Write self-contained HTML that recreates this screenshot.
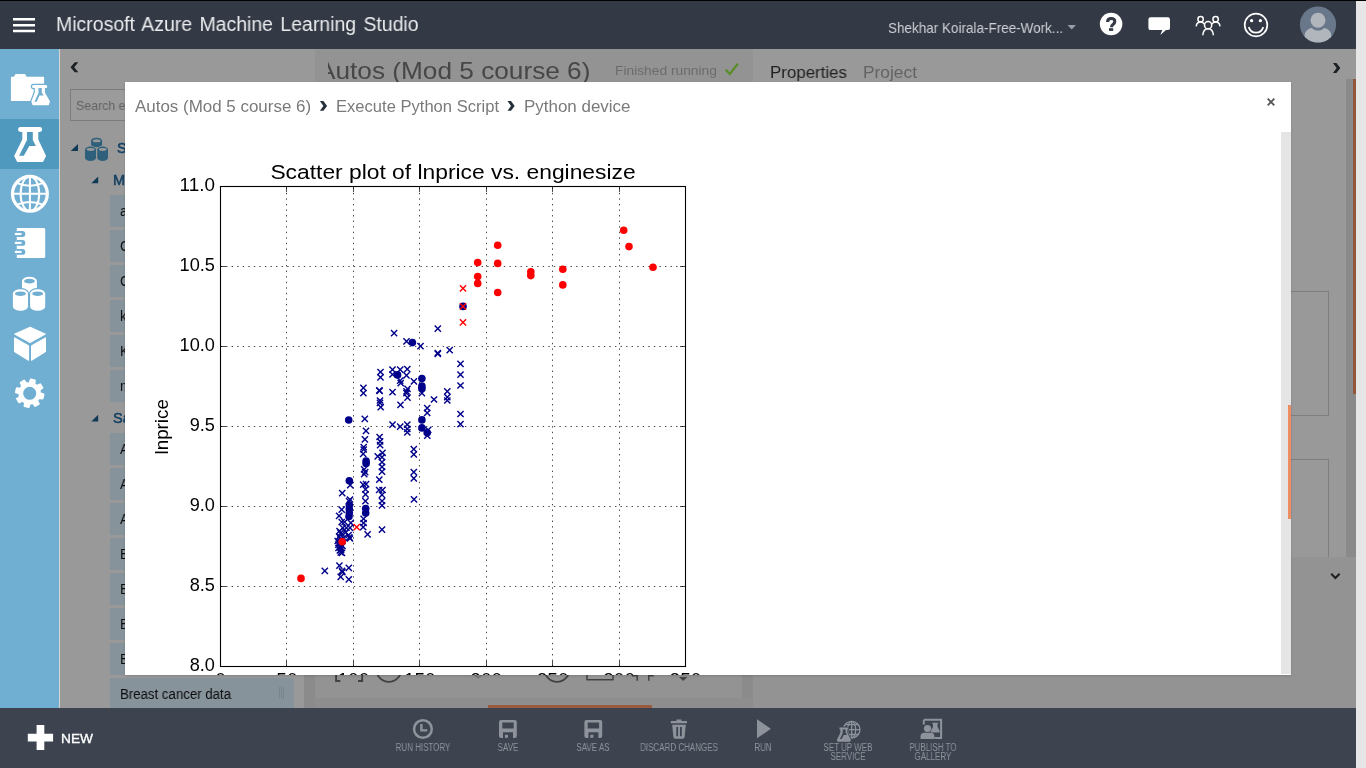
<!DOCTYPE html>
<html lang="en">
<head>
<meta charset="utf-8">
<title>Microsoft Azure Machine Learning Studio</title>
<style>
*{box-sizing:border-box;margin:0;padding:0}
html,body{width:1366px;height:768px;overflow:hidden;background:#999;font-family:"Liberation Sans",sans-serif;}
.abs{position:absolute}
.t{position:absolute;white-space:nowrap;line-height:1;transform-origin:0 0;will-change:transform}
#topline{left:0;top:0;width:1366px;height:1px;background:#000;z-index:50}
#header{left:0;top:1px;width:1356px;height:48px;background:#343a45}
#rstrip{left:1356px;top:1px;width:10px;height:767px;background:#e6e6e6}
#sidebar{left:0;top:49px;width:59px;height:659px;background:#70afd2}
#sideline{left:59px;top:49px;width:1px;height:659px;background:#d6d3d1}
#sidesel{left:0;top:119px;width:59px;height:50px;background:#4f98be}
#palette{left:60px;top:49px;width:255px;height:659px;background:#999;overflow:hidden}
#canvas{left:315px;top:49px;width:438px;height:659px;background:#939393;overflow:hidden}
#props{left:753px;top:49px;width:603px;height:659px;background:#999;overflow:hidden}
#bottombar{left:0;top:708px;width:1356px;height:60px;background:#3d4450}
#modal{left:125px;top:82px;width:1166px;height:593px;background:#fff;overflow:hidden;box-shadow:0 1px 2px rgba(0,0,0,.15)}
.pitem{position:absolute;left:50px;width:184px;height:32px;background:#87939b}
.pitem span{will-change:transform;position:absolute;left:9.700px;top:9.100px;font-size:14px;color:#0c0c0c;white-space:nowrap;line-height:1;transform-origin:0 0;transform:scaleX(.945)}
.pitem i{position:absolute;left:169px;top:9px;width:5px;height:12px;border-left:1px solid #79848b;border-right:1px solid #79848b}
.pitem i:after{content:"";position:absolute;left:1px;top:0;width:1px;height:12px;background:#79848b}
.bl{will-change:transform;position:absolute;font-size:10px;color:#8e939b;white-space:nowrap;line-height:1;text-align:center;transform:scaleX(.8)}
</style>
</head>
<body>
<div id="topline" class="abs"></div>
<div id="header" class="abs">
<svg class="abs" style="left:0;top:0" width="60" height="48" viewBox="0 1 60 48"><path d="M13 19.2h22M13 25.2h22M13 31.1h22" stroke="#fff" stroke-width="2.5" fill="none"/></svg>
<div id="htitle" class="t" style="left:56.3px;top:12.900px;font-size:20px;color:#e9ebed;word-spacing:2px;transform:scaleX(0.9731)">Microsoft Azure Machine Learning Studio</div>
<div id="huser" class="t" style="left:887.8px;top:19px;font-size:15px;color:#cdd0d5;transform:scaleX(0.8989)">Shekhar Koirala-Free-Work...</div>
<svg class="abs" style="left:1066px;top:22px" width="12" height="8" viewBox="0 0 12 8"><path d="M1.5 2h8.4l-4.2 4.4z" fill="#9aa0a8"/></svg>
<svg id="ihelp" class="abs" style="left:1098px;top:10px" width="26" height="28" viewBox="1098 11 26 28">
<circle cx="1111.100" cy="24.050" r="11.250" fill="#fff"/>
<path d="M1107.600 21.900c0-2.200 1.500-3.400 3.600-3.400s3.600 1.200 3.600 3c0 1.500-.8 2.200-1.800 2.900-1 .7-1.500 1.300-1.500 2.500v.4" fill="none" stroke="#343a45" stroke-width="3.100"/>
<rect x="1109" y="28.200" width="4.200" height="2.700" fill="#343a45"/>
</svg>
<svg id="ichat" class="abs" style="left:1146px;top:10px" width="28" height="28" viewBox="1146 11 28 28">
<path d="M1150.600 17.300h17.200q2.200 0 2.200 2.200v8.400q0 2.200-2.200 2.200h-1.800l-5.700 5 2-5h-11.700q-2.200 0-2.200-2.200v-8.400q0-2.200 2.200-2.200z" fill="#fff"/>
</svg>
<svg id="ipeople" class="abs" style="left:1194px;top:10px" width="28" height="28" viewBox="1194 11 28 28" fill="none" stroke="#fff" stroke-width="1.500">
<circle cx="1200.600" cy="19.200" r="2.700"/><circle cx="1215.600" cy="19.200" r="2.700"/><circle cx="1208.100" cy="25.200" r="3.600"/>
<path d="M1196.200 26.300c.3-2.700 2-4.300 4.400-4.300 1.700 0 3 .8 3.800 2.200M1220 26.300c-.3-2.700-2-4.300-4.400-4.300-1.700 0-3 .8-3.800 2.200M1202.800 35.300c.3-3.800 2.300-6.600 5.300-6.600s5 2.800 5.300 6.600"/>
</svg>
<svg id="ismile" class="abs" style="left:1242px;top:10px" width="28" height="30" viewBox="1242 11 28 30" fill="none" stroke="#fff">
<circle cx="1256" cy="25" r="11.300" stroke-width="1.700"/>
<path d="M1248.700 27.100c1.300 3.700 4 5.600 7.300 5.600s6-1.900 7.300-5.600" stroke-width="1.700"/>
<circle cx="1251.600" cy="20.700" r="1.650" fill="#fff" stroke="none"/><circle cx="1260.400" cy="20.700" r="1.650" fill="#fff" stroke="none"/>
</svg>
<svg id="iavatar" class="abs" style="left:1299px;top:4.300px" width="38" height="38" viewBox="1299 6 38 38">
<defs><clipPath id="avc"><circle cx="1318" cy="25.500" r="18.100"/></clipPath></defs>
<circle cx="1318" cy="25.500" r="18.100" fill="#68778a"/>
<g clip-path="url(#avc)" fill="#b1b6bc"><circle cx="1318" cy="21.200" r="7.500"/><path d="M1304.500 45v-7.500c0-4.800 3.200-8 7.300-8.600 1.600 1.700 3.700 2.600 6.200 2.600s4.600-.9 6.200-2.600c4.100.6 7.300 3.800 7.300 8.600v7.500z"/></g>
</svg>
</div>
<div id="sidebar" class="abs"></div>
<div id="sidesel" class="abs"></div>
<div id="sideline" class="abs"></div>
<svg id="sideicons" class="abs" style="left:0;top:49px" width="60" height="659" viewBox="0 49 60 659">
<!-- folder + flask -->
<path d="M10.900 101V77.500q0-.7.700-.7h2.300l1.300-2.200q.3-.5.900-.5h8.500q.6 0 .9.500l1 2.200h16.900q.7 0 .7.700V101z" fill="#fff"/>
<path d="M33.500 85h12.300q1.500 0 1.500 1.500t-1.500 1.500h-.9v4.500l5.100 8.900-1.300 3.800h-16.100l-1.300-3.800 3.500-8.900v-4.500h-1.300q-1.500 0-1.500-1.500t1.500-1.500z" fill="#fff" stroke="#70afd2" stroke-width="2.400" stroke-linejoin="round"/>
<path d="M33.500 85h12.300q1.500 0 1.500 1.500t-1.500 1.500h-.9v4.500l5.100 8.900-1.300 3.800h-16.100l-1.300-3.800 3.500-8.900v-4.500h-1.300q-1.500 0-1.500-1.500t1.500-1.500z" fill="#fff"/>
<path d="M38.500 88v5l-4.100 8.700h2.300l2.800-6.200h4.300l-2-2.800V88z" fill="#70afd2"/>
<!-- flask selected -->
<path d="M20.500 127.100h19.200a2.450 2.450 0 0 1 0 4.900h-1.400v7.500l7.800 16.500-3.100 5.900h-25.800l-3.100-5.900 8.200-16.500v-7.500h-1.800a2.450 2.450 0 0 1 0-4.900z" fill="#fff"/>
<path d="M27 132v8l-7.900 15.800h4.700l5.500-9.900h6.600l-3.100-5.900v-8z" fill="#4f98be"/>
<!-- globe -->
<g fill="none" stroke="#fff"><circle cx="29.900" cy="193.800" r="17.400" stroke-width="3.200"/>
<g stroke-width="2"><path d="M29.900 176.500v34.600M12.500 193.800h34.800"/><ellipse cx="29.900" cy="193.800" rx="9.300" ry="17.300"/>
<path d="M16.500 182.800q13.400 5.800 26.800 0M16.500 204.800q13.400-5.800 26.800 0"/></g></g>
<!-- notebook -->
<path d="M16.800 227.900h26.900q1.500 0 1.500 1.500v27.100q0 1.500-1.500 1.500h-26.900z" fill="#fff"/>
<g fill="#70afd2"><path d="M16.800 231.050h5.600a2.950 2.950 0 0 1 0 5.900h-5.600zM16.800 239.950h5.600a2.950 2.950 0 0 1 0 5.900h-5.600zM16.800 248.950h5.600a2.950 2.950 0 0 1 0 5.900h-5.600z"/></g>
<g fill="#fff"><rect x="14.800" y="232.950" width="6.700" height="2.100"/><rect x="14.800" y="241.850" width="6.700" height="2.100"/><rect x="14.800" y="250.850" width="6.700" height="2.100"/></g>
<!-- cylinders -->
<g fill="#fff" stroke="#70afd2" stroke-width="2.200" paint-order="stroke" style="paint-order:stroke">
<path d="M22 281a7.450 4.300 0 0 1 14.900 0v10a7.450 4.300 0 0 1-14.900 0z"/>
<path d="M12.900 293.500a7.550 4.300 0 0 1 15.100 0v13a7.550 4.300 0 0 1-15.100 0z"/>
<path d="M30.100 293.500a7.550 4.300 0 0 1 15.100 0v13a7.550 4.300 0 0 1-15.100 0z"/></g>
<g fill="#70afd2"><ellipse cx="29.450" cy="281.100" rx="5.400" ry="2.300"/><ellipse cx="20.450" cy="293.700" rx="5.400" ry="2.300"/><ellipse cx="37.650" cy="293.700" rx="5.400" ry="2.300"/></g>
<!-- cube -->
<g fill="#fff" stroke="#fff" stroke-width="1" stroke-linejoin="round"><path d="M30.100 327.200l15.300 6.900-15.300 8.500-15.500-8.500z"/><path d="M14.500 337.800l14.100 8v14.600l-14.100-8.700z"/><path d="M31.500 345.800l14-8v13.900l-14 8.700z"/></g>
<!-- gear -->
<path d="M40.1 393.3 L43.5 394.4 L42.5 398.4 L39.0 397.9 L37.1 400.6 L38.7 403.8 L35.2 406.0 L33.1 403.1 L29.7 403.7 L28.6 407.1 L24.6 406.1 L25.1 402.6 L22.4 400.7 L19.2 402.3 L17.0 398.8 L19.9 396.7 L19.3 393.3 L15.9 392.2 L16.9 388.2 L20.4 388.7 L22.3 386.0 L20.7 382.8 L24.2 380.6 L26.3 383.5 L29.7 382.9 L30.8 379.5 L34.8 380.5 L34.3 384.0 L37.0 385.9 L40.2 384.3 L42.4 387.8 L39.5 389.9Z" fill="#fff" stroke="#fff" stroke-width="2" stroke-linejoin="round"/>
<circle cx="29.700" cy="393.300" r="6.500" fill="#70afd2"/>
</svg>
<div id="palette" class="abs">
<svg class="abs" style="left:0;top:0" width="255" height="659" viewBox="60 49 255 659">
<path d="M78.300 62.200h-3.500l-4.300 5.050 4.300 5.050h3.500l-4.100-5.050z" fill="#1c1f24"/>
<path d="M70.700 151h7.300v-7z" fill="#0f3a55"/><path d="M91.300 183.300h6.900v-6.900z" fill="#0f3a55"/><path d="M91.300 421.600h6.900v-6.900z" fill="#0f3a55"/>
<g fill="#2f607b" stroke="#999" stroke-width="1.200" style="paint-order:stroke"><path d="M91.100 140.500a5.500 2.800 0 0 1 11 0v4a5.500 2.800 0 0 1-11 0z"/><path d="M85 149.500a5.500 2.900 0 0 1 11 0v8.500a5.500 2.900 0 0 1-11 0z"/><path d="M97.200 149.500a5.400 2.900 0 0 1 10.800 0v8.500a5.400 2.900 0 0 1-10.800 0z"/></g>
<g fill="#999"><ellipse cx="96.700" cy="140.700" rx="3.900" ry="1.500"/><ellipse cx="90.600" cy="149.500" rx="3.900" ry="1.400"/><ellipse cx="102.700" cy="149.500" rx="3.900" ry="1.400"/></g>
</svg>
<div class="abs" style="left:10px;top:40px;width:230px;height:32px;border:1px solid #7c7c7c;background:#9b9b9b"></div>
<div id="psearch" class="t" style="left:16px;top:49.600px;font-size:13px;color:#636363;transform:scaleX(.95)">Search experiment items</div>
<div id="pS" class="t" style="left:57px;top:91.600px;font-size:14.500px;color:#123f62;-webkit-text-stroke:.5px #123f62">Saved Datasets</div>
<div id="pM" class="t" style="left:52.500px;top:123.900px;font-size:14.500px;color:#123f62;-webkit-text-stroke:.5px #123f62">My Datasets</div>
<div id="pSa" class="t" style="left:52.500px;top:361.600px;font-size:14.500px;color:#123f62;-webkit-text-stroke:.5px #123f62">Samples</div>
<div class="pitem" style="top:146px"><span>autos-prices.csv</span><i></i></div>
<div class="pitem" style="top:181px"><span>Cereals.csv</span><i></i></div>
<div class="pitem" style="top:216px"><span>Credit_Scoring.csv</span><i></i></div>
<div class="pitem" style="top:251px"><span>kc_house_data.csv</span><i></i></div>
<div class="pitem" style="top:286px"><span>KNN_results.csv</span><i></i></div>
<div class="pitem" style="top:321px"><span>nyc-taxi.csv</span><i></i></div>
<div class="pitem" style="top:384px"><span>Adult Census Income Binary ...</span><i></i></div>
<div class="pitem" style="top:419px"><span>Airport Codes Dataset</span><i></i></div>
<div class="pitem" style="top:454px"><span>Automobile price data (Raw)</span><i></i></div>
<div class="pitem" style="top:489px"><span>Bike Rental UCI dataset</span><i></i></div>
<div class="pitem" style="top:524px"><span>Bill Gates RGB Image</span><i></i></div>
<div class="pitem" style="top:559px"><span>Blood donation data</span><i></i></div>
<div class="pitem" style="top:594px"><span>Book Reviews from Amazon</span><i></i></div>
<div class="pitem" style="top:629px"><span>Breast cancer data</span><i></i></div>
<div class="abs" style="left:244px;top:81px;width:11px;height:578px;background:#8b8b8b"></div>
</div>
<div id="canvas" class="abs">
<div id="ctitle" class="abs" style="left:13px;top:9px;width:300px;height:30px;overflow:hidden"><div class="t" style="left:-9.800px;top:0.700px;font-size:24px;color:#474747;transform:scaleX(1.092)">Autos (Mod 5 course 6)</div></div>
<div id="cfin" class="t" style="left:299.8px;top:14.600px;font-size:13.500px;color:#6c6c6c;transform:scaleX(1.0208)">Finished running</div>
<svg class="abs" style="left:408px;top:12px" width="18" height="16" viewBox="723 61 18 16"><path d="M725.500 69.500l4.300 4.500 8-10.200" fill="none" stroke="#5b8c2a" stroke-width="2.200"/></svg>
<svg class="abs" style="left:0;top:620px" width="438" height="39" viewBox="315 669 438 39" fill="none" stroke="#424242" stroke-width="1.500">
<path d="M336.100 675v6h4.200M358 681h4.200v-6" stroke-width="1.900"/>
<circle cx="388.800" cy="669.300" r="12.500" stroke-width="1.800"/><circle cx="557" cy="669.300" r="12.500" stroke-width="1.800"/>
<path d="M473.800 674.300l4.400 3.500 4.400-3.500" stroke="#6c6c6c" stroke-width="1.200"/>
<rect x="587" y="670" width="26" height="9.700" fill="#999"/>
<path d="M632 675.700h5.200v5M653.800 675.700h-5v5"/>
<path d="M679 677h8.400l-4.200 4z" fill="#454545" stroke="none"/>
</svg>
<div class="abs" style="left:427px;top:33px;width:11px;height:616px;background:#8b8b8b"></div>
<div class="abs" style="left:0;top:649px;width:438px;height:10px;background:#8e8e8e"></div>
<div class="abs" style="left:173px;top:656px;width:164px;height:3px;background:#9a5a40"></div>
</div>
<div id="props" class="abs">
<div id="pprop" class="t" style="left:17.3px;top:14.500px;font-size:17px;color:#1f1f1f;transform:scaleX(0.9925)">Properties</div>
<div id="pproj" class="t" style="left:110.3px;top:14.500px;font-size:17px;color:#636363;transform:scaleX(1.0204)">Project</div>
<svg class="abs" style="left:575px;top:10px" width="16" height="16" viewBox="1328 59 16 16"><path d="M1332.900 63h3.500l3.900 5-3.900 4.900h-3.500l3.800-4.900z" fill="#1c1f24"/></svg>
<div class="abs" style="left:400px;top:242px;width:176px;height:125px;border:1px solid #7e7e7e"></div>
<div class="abs" style="left:400px;top:410px;width:176px;height:125px;border:1px solid #7e7e7e"></div>
<div class="abs" style="left:593px;top:30px;width:10px;height:478px;background:#8a8a8a"></div>
<div class="abs" style="left:600px;top:30px;width:3px;height:315px;background:#93553b"></div>
<div class="abs" style="left:0;top:508px;width:603px;height:151px;background:#939393"></div>
<svg class="abs" style="left:574px;top:520px" width="16" height="14" viewBox="1327 569 16 14"><path d="M1331.200 573.800l4.200 4.200 4.200-4.200" fill="none" stroke="#1c1f24" stroke-width="2"/></svg>
</div>
<div id="bottombar" class="abs">
<svg class="abs" style="left:0;top:0" width="1356" height="60" viewBox="0 708 1356 60">
<path d="M36.600 725h7.700v8.700h8.800v7.700h-8.800v8.700h-7.700v-8.700h-8.800v-7.700h8.800z" fill="#fff"/>
<g fill="none" stroke="#8e939b">
<circle cx="422.900" cy="729" r="8.850" stroke-width="2.500"/><path d="M421.400 724v6.400h5.900" stroke-width="2.400"/>
</g>
<g fill="#8e939b">
<path d="M501.0 719.900h13.800q2 0 2 2v14.200q0 2-2 2h-13.800q-2 0-2-2v-14.200q0-2 2-2zM502.3 722.400v6.100h11.400v-6.100zM503.0 732.300v5.800h10v-5.800z" fill-rule="evenodd"/><path d="M504.9 734.800h3.100v3h-3.100z"/>
<path d="M586.4 719.900h13.800q2 0 2 2v14.200q0 2-2 2h-13.800q-2 0-2-2v-14.200q0-2 2-2zM587.7 722.400v6.100h11.400v-6.100zM588.4 732.300v5.800h10v-5.800z" fill-rule="evenodd"/><path d="M590.3 734.800h3.100v3h-3.100z"/>
<path d="M676.500 719.500h5v1.600h5.500v2.200h-16.200v-2.200h5.700zM672.200 724.800h13.600l-1.200 12.300q-.2 1.600-1.800 1.600h-7.600q-1.600 0-1.800-1.600zM676.300 727v9.300h1.800V727zM680 727v9.300h1.800V727z" fill-rule="evenodd"/>
<path d="M757 719.300l13.900 9.500-13.900 9.500z"/>
</g>
<!-- set up web service -->
<g fill="none" stroke="#8e939b" stroke-width="1.300"><circle cx="851.700" cy="729.600" r="8.300"/><path d="M851.700 721.300v16.600M843.400 729.600h16.600M845 724.700h13.400M845 734.500h13.400"/><ellipse cx="851.700" cy="729.600" rx="4" ry="8.300"/></g>
<path d="M839.500 727.500h8.800v2h-.9v3.300l3.600 7.200-1 1.800h-12.200l-1-1.800 3.600-7.200v-3.300h-.9z" fill="#8e939b" stroke="#3d4450" stroke-width="1.600"/>
<path d="M839.500 727.500h8.800v2h-.9v3.300l3.600 7.200-1 1.800h-12.200l-1-1.800 3.600-7.200v-3.300h-.9z" fill="#8e939b"/>
<path d="M842.700 729.500v3.600l-2.800 5.800h1.800l2-4h3.300l-1.400-2.200v-3.200z" fill="#3d4450"/>
<!-- publish to gallery -->
<path d="M923.800 719.800h17.300v18.300h-6.500" fill="none" stroke="#8e939b" stroke-width="2"/>
<path d="M923.800 719.800v4.800" fill="none" stroke="#8e939b" stroke-width="2"/>
<circle cx="927.500" cy="728.500" r="3.600" fill="#8e939b"/><path d="M920.500 738.900v-2.200q0-3.900 3.900-3.900h6.200q3.900 0 3.900 3.900v2.200z" fill="#8e939b"/>
<path d="M932.300 722.800h5.800v1.300h-.6v2.600l2.300 4.600-.6 1.200h-7.900l-.6-1.200 2.300-4.600v-2.600h-.7z" fill="#8e939b"/>
</svg>
<div id="bnew" class="t" style="left:60.8px;top:24.400px;font-size:13.700px;color:#fff;-webkit-text-stroke:.35px #fff;transform:scaleX(0.9926)">NEW</div>
<div id="b1" class="bl" style="left:373px;top:34.800px;width:100px">RUN HISTORY</div>
<div id="b2" class="bl" style="left:457.700px;top:34.800px;width:100px">SAVE</div>
<div id="b3" class="bl" style="left:543.300px;top:34.800px;width:100px">SAVE AS</div>
<div id="b4" class="bl" style="left:628.500px;top:34.800px;width:100px">DISCARD CHANGES</div>
<div id="b5" class="bl" style="left:712.800px;top:34.800px;width:100px">RUN</div>
<div id="b6" class="bl" style="left:798px;top:35.300px;width:100px;line-height:9px">SET UP WEB<br>SERVICE</div>
<div id="b7" class="bl" style="left:883.300px;top:35.300px;width:100px;line-height:9px">PUBLISH TO<br>GALLERY</div>
</div>
<div id="modal" class="abs">
<svg id="chart" class="abs" style="left:0;top:0;will-change:transform" width="1166" height="593" viewBox="125 82 1166 593" role="img" aria-label="Scatter plot of lnprice vs. enginesize" font-family="Liberation Sans, sans-serif">
<defs><path id="mx" d="M-3.100-3.100L3.100 3.100M-3.100 3.100L3.100-3.100" stroke-width="1.400" fill="none"/><circle id="mc" r="3.800"/></defs>
<path d="M286.5 666.5V186.5M353.5 666.5V186.5M419.5 666.5V186.5M486.5 666.5V186.5M552.5 666.5V186.5M619.5 666.5V186.5M220.5 266.5H685.5M220.5 346.5H685.5M220.5 426.5H685.5M220.5 506.5H685.5M220.5 586.5H685.5" stroke="#000" stroke-opacity=".72" stroke-width="1" stroke-dasharray="1.390 4.166" fill="none"/>
<path d="M286.5 666.5v-5.500M286.5 186.5v5.500M353.5 666.5v-5.500M353.5 186.5v5.500M419.5 666.5v-5.500M419.5 186.5v5.500M486.5 666.5v-5.500M486.5 186.5v5.500M552.5 666.5v-5.500M552.5 186.5v5.500M619.5 666.5v-5.500M619.5 186.5v5.500M220.5 266.5h5.500M685.5 266.5h-5.500M220.5 346.5h5.500M685.5 346.5h-5.500M220.5 426.5h5.500M685.5 426.5h-5.500M220.5 506.5h5.500M685.5 506.5h-5.500M220.5 586.5h5.500M685.5 586.5h-5.500" stroke="#000" stroke-width=".700" fill="none"/>
<g stroke="#00008b"><use href="#mx" x="394.1" y="333.2"/><use href="#mx" x="406.5" y="341.4"/><use href="#mx" x="420.5" y="346.1"/><use href="#mx" x="437.8" y="328.6"/><use href="#mx" x="437.8" y="353.0"/><use href="#mx" x="437.8" y="353.8"/><use href="#mx" x="449.7" y="350.1"/><use href="#mx" x="460.5" y="363.9"/><use href="#mx" x="460.5" y="374.7"/><use href="#mx" x="460.5" y="385.5"/><use href="#mx" x="460.5" y="414.0"/><use href="#mx" x="460.5" y="424.1"/><use href="#mx" x="447.3" y="391.3"/><use href="#mx" x="447.3" y="397.1"/><use href="#mx" x="447.3" y="400.5"/><use href="#mx" x="434.0" y="399.5"/><use href="#mx" x="427.2" y="408.2"/><use href="#mx" x="427.2" y="412.8"/><use href="#mx" x="421.9" y="393.2"/><use href="#mx" x="428.2" y="429.9"/><use href="#mx" x="427.3" y="435.6"/><use href="#mx" x="413.9" y="381.4"/><use href="#mx" x="407.3" y="369.2"/><use href="#mx" x="400.2" y="369.6"/><use href="#mx" x="392.5" y="369.6"/><use href="#mx" x="392.5" y="374.5"/><use href="#mx" x="406.5" y="375.4"/><use href="#mx" x="400.2" y="380.7"/><use href="#mx" x="400.7" y="383.1"/><use href="#mx" x="407.5" y="388.9"/><use href="#mx" x="406.5" y="391.3"/><use href="#mx" x="406.5" y="393.2"/><use href="#mx" x="407.5" y="397.6"/><use href="#mx" x="400.5" y="404.8"/><use href="#mx" x="392.5" y="392.1"/><use href="#mx" x="380.5" y="372.0"/><use href="#mx" x="380.5" y="377.3"/><use href="#mx" x="379.3" y="390.4"/><use href="#mx" x="379.6" y="390.9"/><use href="#mx" x="380.0" y="400.5"/><use href="#mx" x="380.0" y="402.9"/><use href="#mx" x="380.7" y="407.2"/><use href="#mx" x="363.4" y="387.9"/><use href="#mx" x="363.4" y="393.2"/><use href="#mx" x="364.8" y="418.8"/><use href="#mx" x="366.0" y="430.8"/><use href="#mx" x="392.5" y="424.6"/><use href="#mx" x="400.2" y="426.7"/><use href="#mx" x="407.3" y="424.6"/><use href="#mx" x="407.3" y="428.9"/><use href="#mx" x="407.3" y="432.3"/><use href="#mx" x="364.9" y="439.4"/><use href="#mx" x="363.7" y="447.1"/><use href="#mx" x="363.7" y="449.5"/><use href="#mx" x="363.2" y="453.9"/><use href="#mx" x="364.2" y="469.3"/><use href="#mx" x="365.2" y="472.2"/><use href="#mx" x="364.2" y="474.1"/><use href="#mx" x="363.2" y="484.7"/><use href="#mx" x="366.1" y="484.2"/><use href="#mx" x="365.5" y="489.3"/><use href="#mx" x="365.5" y="494.4"/><use href="#mx" x="365.4" y="501.2"/><use href="#mx" x="350.2" y="485.2"/><use href="#mx" x="342.2" y="493.2"/><use href="#mx" x="379.6" y="437.0"/><use href="#mx" x="380.1" y="441.3"/><use href="#mx" x="380.1" y="445.2"/><use href="#mx" x="377.7" y="456.3"/><use href="#mx" x="382.5" y="452.9"/><use href="#mx" x="382.0" y="457.2"/><use href="#mx" x="382.0" y="462.1"/><use href="#mx" x="382.0" y="466.9"/><use href="#mx" x="382.0" y="471.7"/><use href="#mx" x="379.3" y="479.7"/><use href="#mx" x="379.1" y="490.0"/><use href="#mx" x="382.5" y="490.0"/><use href="#mx" x="382.0" y="494.8"/><use href="#mx" x="382.0" y="501.0"/><use href="#mx" x="382.0" y="505.4"/><use href="#mx" x="413.8" y="449.2"/><use href="#mx" x="413.8" y="454.4"/><use href="#mx" x="413.8" y="472.2"/><use href="#mx" x="413.8" y="478.4"/><use href="#mx" x="414.0" y="499.3"/><use href="#mx" x="382.0" y="529.6"/><use href="#mx" x="367.6" y="534.4"/><use href="#mx" x="363.6" y="518.8"/><use href="#mx" x="363.6" y="523.0"/><use href="#mx" x="363.2" y="527.2"/><use href="#mx" x="349.0" y="501.0"/><use href="#mx" x="350.0" y="499.5"/><use href="#mx" x="341.7" y="509.7"/><use href="#mx" x="339.1" y="515.9"/><use href="#mx" x="341.7" y="522.0"/><use href="#mx" x="344.6" y="522.0"/><use href="#mx" x="342.8" y="527.9"/><use href="#mx" x="346.4" y="527.9"/><use href="#mx" x="350.0" y="527.9"/><use href="#mx" x="350.8" y="522.8"/><use href="#mx" x="345.7" y="532.3"/><use href="#mx" x="348.6" y="535.2"/><use href="#mx" x="350.0" y="538.5"/><use href="#mx" x="340.6" y="533.0"/><use href="#mx" x="339.1" y="536.6"/><use href="#mx" x="337.7" y="541.0"/><use href="#mx" x="338.4" y="544.7"/><use href="#mx" x="340.3" y="539.5"/><use href="#mx" x="340.7" y="547.6"/><use href="#mx" x="341.1" y="549.8"/><use href="#mx" x="340.7" y="552.5"/><use href="#mx" x="349.3" y="537.3"/><use href="#mx" x="339.5" y="531.0"/><use href="#mx" x="342.0" y="534.0"/><use href="#mx" x="339.0" y="543.0"/><use href="#mx" x="342.5" y="546.0"/><use href="#mx" x="339.8" y="550.5"/><use href="#mx" x="342.0" y="552.8"/><use href="#mx" x="343.5" y="538.0"/><use href="#mx" x="338.5" y="548.0"/><use href="#mx" x="341.0" y="545.0"/><use href="#mx" x="340.0" y="541.5"/><use href="#mx" x="324.8" y="570.9"/><use href="#mx" x="339.4" y="565.7"/><use href="#mx" x="342.0" y="570.8"/><use href="#mx" x="342.4" y="572.1"/><use href="#mx" x="340.7" y="576.8"/><use href="#mx" x="348.8" y="567.8"/><use href="#mx" x="348.8" y="579.4"/></g>
<g fill="#00008b"><use href="#mc" x="463.0" y="306.4"/><use href="#mc" x="412.4" y="342.6"/><use href="#mc" x="397.6" y="374.9"/><use href="#mc" x="421.9" y="378.5"/><use href="#mc" x="421.9" y="386.0"/><use href="#mc" x="421.9" y="388.4"/><use href="#mc" x="421.9" y="419.9"/><use href="#mc" x="421.9" y="427.9"/><use href="#mc" x="427.2" y="432.8"/><use href="#mc" x="348.7" y="420.0"/><use href="#mc" x="366.1" y="461.1"/><use href="#mc" x="366.1" y="463.5"/><use href="#mc" x="349.3" y="480.7"/><use href="#mc" x="349.3" y="505.0"/><use href="#mc" x="349.3" y="509.0"/><use href="#mc" x="349.3" y="513.0"/><use href="#mc" x="349.0" y="516.5"/><use href="#mc" x="365.7" y="508.5"/><use href="#mc" x="365.7" y="513.0"/></g>
<g fill="#f00"><use href="#mc" x="623.7" y="230.3"/><use href="#mc" x="629.0" y="246.6"/><use href="#mc" x="653.0" y="267.2"/><use href="#mc" x="497.7" y="245.3"/><use href="#mc" x="497.7" y="263.4"/><use href="#mc" x="477.7" y="262.6"/><use href="#mc" x="477.7" y="276.5"/><use href="#mc" x="477.7" y="283.4"/><use href="#mc" x="497.7" y="292.5"/><use href="#mc" x="530.8" y="271.8"/><use href="#mc" x="530.8" y="275.6"/><use href="#mc" x="562.8" y="269.3"/><use href="#mc" x="562.8" y="284.9"/><use href="#mc" x="301.0" y="578.4"/><use href="#mc" x="342.2" y="541.7"/></g>
<g stroke="#f00"><use href="#mx" x="463.0" y="288.3"/><use href="#mx" x="463.0" y="322.3"/><use href="#mx" x="463.0" y="306.4"/><use href="#mx" x="356.7" y="527.2"/></g>
<rect x="220.5" y="186.5" width="465.0" height="480.0" fill="none" stroke="#000" stroke-width="1.100"/>
<text id="ctit" x="453" y="179.300" text-anchor="middle" font-size="20.500" textLength="365.200" lengthAdjust="spacingAndGlyphs" fill="#000">Scatter plot of lnprice vs. enginesize</text>
<text x="214.9" y="191.3" text-anchor="end" font-size="18.200" textLength="35.3" lengthAdjust="spacingAndGlyphs" fill="#000">11.0</text>
<text x="214.9" y="271.4" text-anchor="end" font-size="18.200" textLength="35.3" lengthAdjust="spacingAndGlyphs" fill="#000">10.5</text>
<text x="214.9" y="351.4" text-anchor="end" font-size="18.200" textLength="35.3" lengthAdjust="spacingAndGlyphs" fill="#000">10.0</text>
<text x="214.9" y="431.4" text-anchor="end" font-size="18.200" textLength="25.2" lengthAdjust="spacingAndGlyphs" fill="#000">9.5</text>
<text x="214.9" y="511.4" text-anchor="end" font-size="18.200" textLength="25.2" lengthAdjust="spacingAndGlyphs" fill="#000">9.0</text>
<text x="214.9" y="591.4" text-anchor="end" font-size="18.200" textLength="25.2" lengthAdjust="spacingAndGlyphs" fill="#000">8.5</text>
<text x="214.9" y="671.4" text-anchor="end" font-size="18.200" textLength="25.2" lengthAdjust="spacingAndGlyphs" fill="#000">8.0</text>
<text x="220.5" y="686.400" text-anchor="middle" font-size="18.200" textLength="10.6" lengthAdjust="spacingAndGlyphs" fill="#000">0</text>
<text x="286.9" y="686.400" text-anchor="middle" font-size="18.200" textLength="21.2" lengthAdjust="spacingAndGlyphs" fill="#000">50</text>
<text x="353.4" y="686.400" text-anchor="middle" font-size="18.200" textLength="31.8" lengthAdjust="spacingAndGlyphs" fill="#000">100</text>
<text x="419.8" y="686.400" text-anchor="middle" font-size="18.200" textLength="31.8" lengthAdjust="spacingAndGlyphs" fill="#000">150</text>
<text x="486.2" y="686.400" text-anchor="middle" font-size="18.200" textLength="31.8" lengthAdjust="spacingAndGlyphs" fill="#000">200</text>
<text x="552.6" y="686.400" text-anchor="middle" font-size="18.200" textLength="31.8" lengthAdjust="spacingAndGlyphs" fill="#000">250</text>
<text x="619.1" y="686.400" text-anchor="middle" font-size="18.200" textLength="31.8" lengthAdjust="spacingAndGlyphs" fill="#000">300</text>
<text x="685.5" y="686.400" text-anchor="middle" font-size="18.200" textLength="31.8" lengthAdjust="spacingAndGlyphs" fill="#000">350</text>
<text transform="translate(168.200 426.800) rotate(-90)" text-anchor="middle" font-size="18" textLength="55.200" lengthAdjust="spacingAndGlyphs" fill="#000">lnprice</text>
</svg>
<div id="bc1" class="t" style="left:10.0px;top:16px;font-size:16.300px;color:#7a7a7a;transform:scaleX(1.0406)">Autos (Mod 5 course 6)</div>
<div id="bc2" class="t" style="left:210.8px;top:16px;font-size:16.300px;color:#7a7a7a;transform:scaleX(1.0176)">Execute Python Script</div>
<div id="bc3" class="t" style="left:398.5px;top:16px;font-size:16.300px;color:#7a7a7a;transform:scaleX(1.0412)">Python device</div>
<svg class="abs" style="left:190px;top:15px" width="200" height="18" viewBox="315 97 200 18" fill="#26303a"><path d="M319.900 101.100h3.500l3.700 4.800-3.700 4.800h-3.500l3.500-4.800zM507.500 101.100h3.500l3.700 4.800-3.700 4.800h-3.500l3.500-4.800z"/></svg>
<svg class="abs" style="left:1140px;top:14px" width="12" height="12" viewBox="1265 96 12 12"><path d="M1267.700 98.700l6.600 6.600M1274.300 98.700l-6.600 6.600" stroke="#555" stroke-width="1.800" fill="none"/></svg>
<div class="abs" style="left:1156px;top:50px;width:10px;height:542px;background:#e5e5e5"></div>
<div class="abs" style="left:1163px;top:323px;width:3px;height:114px;background:#f08c62"></div>
</div>
<div id="rstrip" class="abs"></div>
</body>
</html>
